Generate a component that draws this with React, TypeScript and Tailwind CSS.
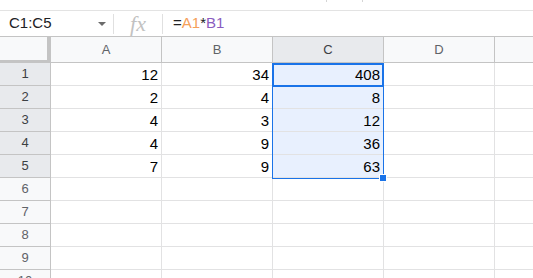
import React from "react";

const cols = ["A", "B", "C", "D"];
const data: (number | null)[][] = [
  [12, 34, 408],
  [2, 4, 8],
  [4, 3, 12],
  [4, 9, 36],
  [7, 9, 63],
  [],
  [],
  [],
  [],
  [],
];

const font = { fontFamily: "'Liberation Sans', Arial, sans-serif" };

const App: React.FC = () => {
  return (
    <div className="h-[278px] w-[533px] overflow-hidden bg-white" style={font}>
      {/* toolbar remnant */}
      <div className="flex h-[11px] border-b border-[#e3e3e3]">
        <div className="ml-[326px] h-[2px] w-px bg-[#d5d5d5]" />
        <div className="ml-[35px] h-[2px] w-px bg-[#d5d5d5]" />
      </div>

      {/* formula bar */}
      <div className="flex h-[26px] items-center border-b border-[#c4c4c4]">
        <div className="flex w-[113px] items-center pl-[9px] pr-[7px]">
          <span className="text-[15px] text-[#202124]">C1:C5</span>
          <span className="ml-auto h-0 w-0 border-x-[4px] border-t-[4px] border-x-transparent border-t-[#6b6b6b]" />
        </div>
        <div className="h-[20px] w-px bg-[#e0e0e0]" />
        <div className="flex w-[48px] items-center justify-center">
          <span
            className="text-[22px] italic leading-none text-[#c2c2c2]"
            style={{ fontFamily: "'Liberation Serif', 'Times New Roman', serif" }}
          >
            fx
          </span>
        </div>
        <div className="h-[20px] w-px bg-[#e0e0e0]" />
        <div className="pl-[10px] text-[15px] text-[#202124]">
          =<span className="text-[#f5a05a]">A1</span>*<span className="text-[#8a5cc0]">B1</span>
        </div>
      </div>

      {/* grid */}
      <div className="relative">
        <div className="flex h-[26px]">
          <div className="w-[51px] shrink-0 border-b-[3px] border-r-[4px] border-[#c4c4c4] bg-[#f8f9fa]" />
          {cols.map((c) => (
            <div
              key={c}
              className={`flex w-[111px] shrink-0 items-center justify-center border-b border-r border-[#c4c4c4] text-[13px] ${
                c === "C" ? "bg-[#e8eaed] text-[#3c4043]" : "bg-[#f8f9fa] text-[#5f6368]"
              }`}
            >
              {c}
            </div>
          ))}
          <div className="flex-1 border-b border-[#c4c4c4] bg-[#f8f9fa]" />
        </div>

        {data.map((row, r) => (
          <div key={r} className="flex h-[23px]">
            <div
              className={`flex w-[51px] shrink-0 items-center justify-center border-b border-r border-[#c4c4c4] text-[13px] ${
                r < 5 ? "bg-[#e8eaed] text-[#3c4043]" : "bg-[#f8f9fa] text-[#5f6368]"
              }`}
            >
              {r + 1}
            </div>
            {cols.map((c, ci) => (
              <div
                key={c}
                className={`flex w-[111px] shrink-0 items-end justify-end border-b border-r border-[#e2e2e3] pb-[2px] pr-[3px] text-[15px] leading-[17px] text-black ${
                  c === "C" && r < 5 ? "bg-[#e8f0fe]" : ""
                }`}
              >
                {row[ci] ?? ""}
              </div>
            ))}
            <div className="flex-1 border-b border-[#e2e2e3]" />
          </div>
        ))}

        {/* selection range */}
        <div className="pointer-events-none absolute left-[272px] top-[26px] h-[116px] w-[112px] border border-[#1a73e8]" />
        <div className="pointer-events-none absolute left-[272px] top-[26px] h-[24px] w-[112px] border-2 border-[#1a73e8]" />
        <div className="absolute left-[379px] top-[137px] h-[8px] w-[8px] border border-white bg-[#1a73e8]" />
      </div>
    </div>
  );
};

export default App;
